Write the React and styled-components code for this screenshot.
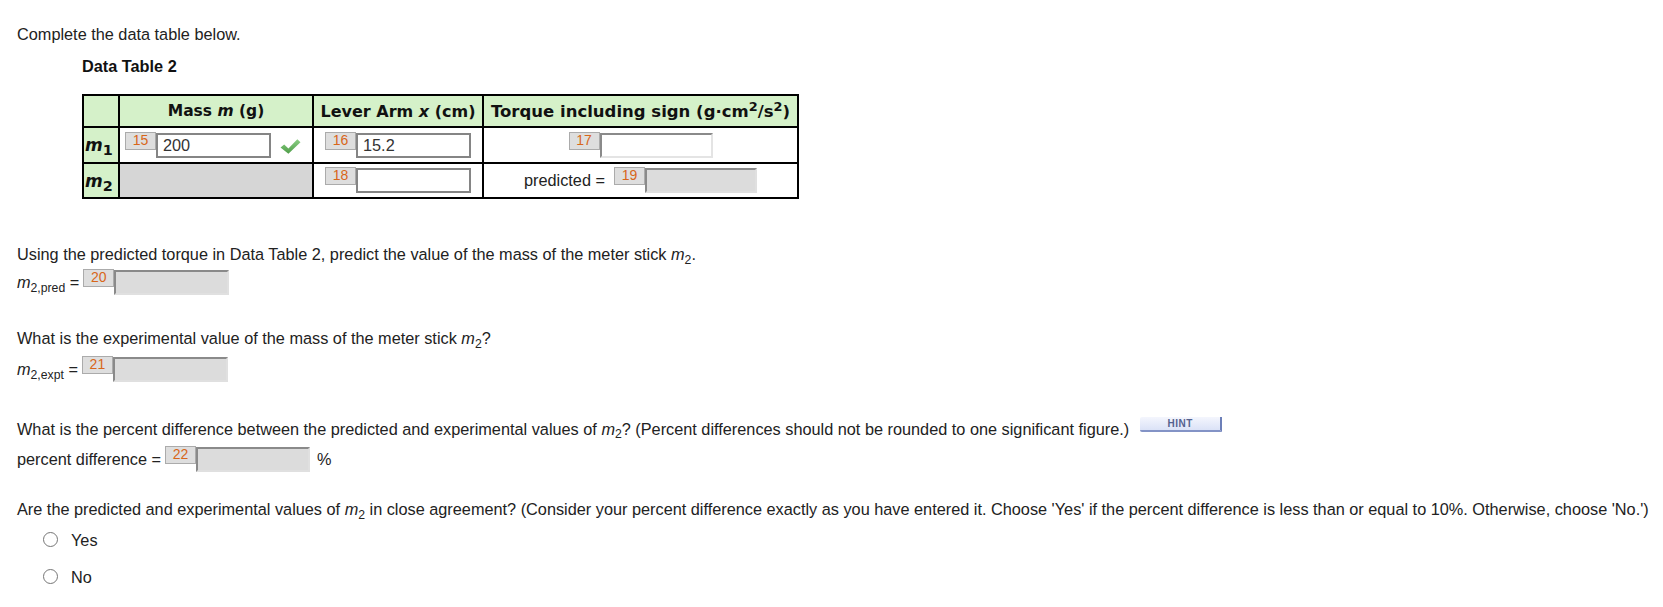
import React from 'react';
import styled, { createGlobalStyle } from 'styled-components';

// ============================================================
// Data Table 2 worksheet - torque / meter stick mass question
// ============================================================

const GlobalStyle = createGlobalStyle`
  html, body {
    margin: 0;
    padding: 0;
    background: #fff;
  }
  body {
    font-family: "Liberation Sans", Arial, sans-serif;
    font-size: 16.3px;
    color: #222;
  }
`;

const Page = styled.div`
  padding: 24px 17px 20px 17px;
  width: 1663px;
  box-sizing: border-box;
`;

const Para = styled.p`
  margin: ${p => p.$mt || 0}px 0 0 0;
  line-height: 20px;
  white-space: nowrap;
`;

const TableBlock = styled.div`
  margin-left: 65px;
  margin-top: 12px;
`;

const Caption = styled.div`
  font-weight: 700;
  line-height: 20px;
  color: #111;
`;

const Table = styled.table`
  margin-top: 18px;
  border-collapse: collapse;
  table-layout: fixed;
  border: 2px solid #000;
  font-family: "DejaVu Sans", Verdana, sans-serif;
`;

const HeadCell = styled.th`
  background: #d5f1c9;
  border: 2px solid #000;
  height: 30px;
  padding: 0;
  font-size: ${p => p.$fs || 15.5}px;
  font-weight: 700;
  color: #111;
  text-align: center;
  white-space: nowrap;
`;

const RowHead = styled.th`
  background: #d5f1c9;
  border: 2px solid #000;
  padding: 0 0 0 1px;
  text-align: left;
  font-size: 17px;
  font-weight: 700;
  color: #111;
`;

const Cell = styled.td`
  border: 2px solid #000;
  padding: 0;
  height: ${p => p.$h || 34}px;
  background: ${p => (p.$blank ? '#d6d6d6' : '#fff')};
  text-align: center;
  vertical-align: middle;
`;

const CellInner = styled.div`
  display: flex;
  align-items: flex-start;
  justify-content: ${p => p.$start ? 'flex-start' : 'center'};
  padding-left: ${p => p.$start ? 5 : 0}px;
  font-family: "Liberation Sans", Arial, sans-serif;
  font-size: 16.3px;
  color: #222;
`;

const Var = styled.i`
  font-style: italic;
`;

const Sub = styled.sub`
  font-size: ${p => p.$big ? 0.85 : 0.75}em;
  font-style: normal;
  vertical-align: -0.3em;
  line-height: 0;
`;

const Sup = styled.sup`
  font-size: 0.78em;
  vertical-align: 0.5em;
  line-height: 0;
`;

const Badge = styled.span`
  display: inline-flex;
  align-items: center;
  justify-content: center;
  box-sizing: border-box;
  width: 31px;
  height: 18px;
  margin-top: -1px;
  background: #dedede;
  border: 1px solid #ababab;
  color: #d8661a;
  font-family: "Liberation Sans", Arial, sans-serif;
  font-size: 14px;
  line-height: 1;
  padding-bottom: 2px;
`;

const Field = styled.span`
  display: inline-flex;
  align-items: center;
  box-sizing: border-box;
  width: ${p => p.$w || 115}px;
  height: 25px;
  padding: 0 5px;
  font-family: "Liberation Sans", Arial, sans-serif;
  font-size: 16.3px;
  color: #333;
  text-align: left;
  background: ${p => (p.$disabled ? '#dcdcdc' : '#fff')};
  border-style: solid;
  border-width: 2px;
  border-color: ${p =>
    p.$answered
      ? '#858585'
      : p.$disabled
        ? '#8a8a8a #e0e0e0 #e0e0e0 #8a8a8a'
        : '#8a8a8a #e4e4e4 #e4e4e4 #8a8a8a'};
`;

const Check = styled.svg`
  margin: 3px 0 0 8px;
  flex: none;
`;

const InlineText = styled.span`
  line-height: 25px;
  margin-right: ${p => p.$gap || 4}px;
  white-space: nowrap;
`;

const AnswerRow = styled.div`
  display: flex;
  align-items: flex-start;
  margin-top: ${p => p.$mt || 6}px;
  height: 25px;
`;

const Unit = styled.span`
  line-height: 25px;
  margin-left: 7px;
`;

const HintButton = styled.span`
  display: inline-flex;
  align-items: center;
  justify-content: center;
  box-sizing: border-box;
  width: 82px;
  height: 15px;
  margin-left: 11px;
  vertical-align: 8px;
  background: linear-gradient(to bottom, #f4f6fd 0%, #dbe2f7 100%);
  border-bottom: 2px solid #8393c6;
  border-right: 2px solid #6c7fb8;
  border-radius: 2px 0 0 2px;
  color: #55628f;
  font-size: 10px;
  font-weight: 700;
  letter-spacing: 0.5px;
`;

const Options = styled.div`
  margin-left: 26px;
  margin-top: 11px;
  display: flex;
  flex-direction: column;
  gap: 17px;
`;

const Option = styled.label`
  display: flex;
  align-items: center;
  gap: 13px;
  line-height: 20px;
`;

const Radio = styled.input`
  appearance: none;
  margin: 0;
  width: 15px;
  height: 15px;
  border: 1px solid #767676;
  border-radius: 50%;
  background: #fff;
`;

const CheckMark = () => (
  <Check width="23" height="21" viewBox="0 0 21 20">
    <defs>
      <linearGradient id="ck" x1="0" y1="0" x2="0" y2="1">
        <stop offset="0" stopColor="#8ccf85" />
        <stop offset="1" stopColor="#4e9d48" />
      </linearGradient>
    </defs>
    <path d="M1 11 L4.5 8 L8.5 12 L17 3 L20 6 L8.5 17 Z" fill="url(#ck)" />
  </Check>
);

const Answer = ({ n, value, disabled, answered, w }) => (
  <>
    <Badge>{n}</Badge>
    <Field $disabled={disabled} $answered={answered} $w={w}>{value}</Field>
  </>
);

const M2 = () => (
  <><Var>m</Var><Sub>2</Sub></>
);

export default function App() {
  return (
    <Page>
      <GlobalStyle />
      <Para>Complete the data table below.</Para>

      <TableBlock>
        <Caption>Data Table 2</Caption>
        <Table>
          <colgroup>
            <col style={{ width: 36 }} />
            <col style={{ width: 194 }} />
            <col style={{ width: 170 }} />
            <col style={{ width: 315 }} />
          </colgroup>
          <thead>
            <tr>
              <HeadCell />
              <HeadCell>Mass <Var>m</Var> (g)</HeadCell>
              <HeadCell $fs={16}>Lever Arm <Var>x</Var> (cm)</HeadCell>
              <HeadCell $fs={16.5}>Torque including sign (g·cm<Sup>2</Sup>/s<Sup>2</Sup>)</HeadCell>
            </tr>
          </thead>
          <tbody>
            <tr>
              <RowHead><Var>m</Var><Sub $big>1</Sub></RowHead>
              <Cell>
                <CellInner $start>
                  <Answer n="15" value="200" answered />
                  <CheckMark />
                </CellInner>
              </Cell>
              <Cell>
                <CellInner><Answer n="16" value="15.2" answered /></CellInner>
              </Cell>
              <Cell>
                <CellInner><Answer n="17" value="" w={113} /></CellInner>
              </Cell>
            </tr>
            <tr>
              <RowHead><Var>m</Var><Sub $big>2</Sub></RowHead>
              <Cell $blank $h={33} />
              <Cell $h={33}>
                <CellInner><Answer n="18" value="" answered /></CellInner>
              </Cell>
              <Cell $h={33}>
                <CellInner>
                  <InlineText $gap={9}>predicted =</InlineText>
                  <Answer n="19" value="" disabled w={112} />
                </CellInner>
              </Cell>
            </tr>
          </tbody>
        </Table>
      </TableBlock>

      <Para $mt={45}>Using the predicted torque in Data Table 2, predict the value of the mass of the meter stick <M2 />.</Para>
      <AnswerRow $mt={6}>
        <InlineText><Var>m</Var><Sub>2,pred</Sub> =</InlineText>
        <Answer n="20" value="" disabled />
      </AnswerRow>

      <Para $mt={33}>What is the experimental value of the mass of the meter stick <M2 />?</Para>
      <AnswerRow $mt={9}>
        <InlineText><Var>m</Var><Sub>2,expt</Sub> =</InlineText>
        <Answer n="21" value="" disabled />
      </AnswerRow>

      <Para $mt={35}>
        What is the percent difference between the predicted and experimental values of <M2 />? (Percent differences should not be rounded to one significant figure.)
        <HintButton>HINT</HintButton>
      </Para>
      <AnswerRow $mt={8}>
        <InlineText>percent difference =</InlineText>
        <Answer n="22" value="" disabled w={114} />
        <Unit>%</Unit>
      </AnswerRow>

      <Para $mt={27}>
        Are the predicted and experimental values of <M2 /> in close agreement? (Consider your percent difference exactly as you have entered it. Choose 'Yes' if the percent difference is less than or equal to 10%. Otherwise, choose 'No.')
      </Para>
      <Options>
        <Option><Radio type="radio" name="agree" />Yes</Option>
        <Option><Radio type="radio" name="agree" />No</Option>
      </Options>
    </Page>
  );
}
